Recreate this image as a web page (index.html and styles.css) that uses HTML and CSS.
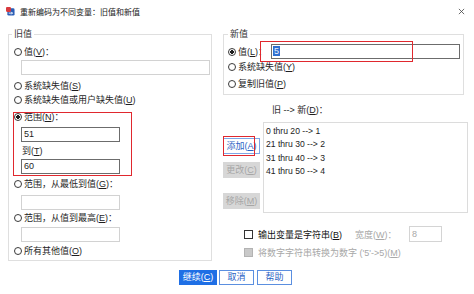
FILE: index.html
```html
<!DOCTYPE html>
<html lang="zh-CN">
<head>
<meta charset="utf-8">
<title>重新编码为不同变量：旧值和新值</title>
<link rel="stylesheet" href="styles.css">
</head>
<body>
<div class="dialog">
  <div class="titlebar">
    <svg class="app-icon" viewBox="0 0 10 10" aria-hidden="true">
      <rect x="1.5" y="1.5" width="8" height="8" rx="1.5" fill="#2a5db5"/>
      <rect x="0" y="0" width="5.5" height="5.5" rx="1.2" fill="#d83a3e"/>
      <path d="M3 6.8h4.2M5.8 5.4l1.4 1.4-1.4 1.4" fill="none" stroke="#fff" stroke-width="1"/>
    </svg>
    <span class="title">重新编码为不同变量：旧值和新值</span>
    <svg class="close" viewBox="0 0 8 8" aria-hidden="true">
      <path d="M1 1l6 6M7 1l-6 6" stroke="#444" stroke-width="0.9" fill="none"/>
    </svg>
  </div>

  <div class="main">
    <fieldset class="group old">
      <legend>旧值</legend>
      <div class="opt"><span class="radio"></span>值(<u>V</u>)：</div>
      <div class="field wide gap1"></div>
      <div class="opt gap4"><span class="radio"></span>系统缺失值(<u>S</u>)</div>
      <div class="opt"><span class="radio"></span>系统缺失值或用户缺失值(<u>U</u>)</div>
      <div class="range">
        <div class="opt"><span class="radio on"></span>范围(<u>N</u>)：</div>
        <div class="field short active gap3">51</div>
        <div class="sub">到(<u>T</u>)</div>
        <div class="field short active gap1">60</div>
        <span class="mark mark-range"></span>
      </div>
      <div class="opt gap3"><span class="radio"></span>范围，从最低到值(<u>G</u>)：</div>
      <div class="field short gap4"></div>
      <div class="opt gap1"><span class="radio"></span>范围，从值到最高(<u>E</u>)：</div>
      <div class="field short gap2"></div>
      <div class="opt gap2"><span class="radio"></span>所有其他值(<u>O</u>)</div>
    </fieldset>

    <div class="right">
      <fieldset class="group new">
        <legend>新值</legend>
        <div class="opt value-row">
          <span class="radio on"></span>
          <span class="lbl">值(<u>L</u>)：</span>
          <div class="field newval active"><span class="sel">5</span></div>
          <span class="mark mark-new"></span>
        </div>
        <div class="opt gap1"><span class="radio"></span>系统缺失值(<u>Y</u>)</div>
        <div class="opt gap3"><span class="radio"></span>复制旧值(<u>P</u>)</div>
      </fieldset>

      <div class="map-label">旧 --&gt; 新(<u>D</u>)：</div>
      <div class="map-row">
        <div class="btns">
          <div class="btn add">添加(<u>A</u>)<span class="mark mark-add"></span></div>
          <div class="btn disabled change">更改(<u>C</u>)</div>
          <div class="btn disabled remove">移除(<u>M</u>)</div>
        </div>
        <div class="list">
          <div class="item">0 thru 20 --&gt; 1</div>
          <div class="item">21 thru 30 --&gt; 2</div>
          <div class="item">31 thru 40 --&gt; 3</div>
          <div class="item">41 thru 50 --&gt; 4</div>
        </div>
      </div>

      <div class="chk-row first">
        <span class="check"></span>
        <span class="chk-text">输出变量是字符串(<u>B</u>)</span>
        <span class="wlabel">宽度(<u>W</u>)：</span>
        <div class="field width-field">8</div>
      </div>
      <div class="chk-row second">
        <span class="check off"></span>
        <span class="chk-text muted">将数字字符串转换为数字 ('5'-&gt;5)(<u>M</u>)</span>
      </div>
    </div>
  </div>

  <div class="footer">
    <div class="fbtn primary">继续(<u>C</u>)</div>
    <div class="fbtn cancel">取消</div>
    <div class="fbtn help">帮助</div>
  </div>
</div>
</body>
</html>
```

FILE: styles.css
```css
* { box-sizing: border-box; }

html, body {
  margin: 0;
  padding: 0;
  background: #ffffff;
}

body {
  width: 474px;
  height: 294px;
  overflow: hidden;
  font-family: "Liberation Sans", "Noto Sans CJK SC", sans-serif;
  font-size: 9px;
  color: #1e1e1e;
}

u { text-decoration: underline; text-underline-offset: 1px; }

/* title bar */
.titlebar {
  height: 22px;
  display: flex;
  align-items: center;
  padding: 0 9px 0 6px;
}
.app-icon { width: 9px; height: 9px; flex: none; }
.title {
  flex: 1;
  margin-left: 5px;
  font-size: 8px;
  color: #222;
}
.close { width: 7px; height: 7px; flex: none; }

/* layout */
.main {
  display: flex;
  margin-top: 6px;
  padding-left: 8px;
}

fieldset.group {
  margin: 0;
  min-width: 0;
  border: 1px solid #dfdfdf;
}
legend {
  font-size: 9px;
  line-height: 12px;
  height: 12px;
  padding: 0 2px;
  color: #333;
}

.old {
  width: 204px;
  padding: 5px 1px 2px 5px;
}
.old legend { margin-left: -2px; }

.opt {
  display: flex;
  align-items: center;
  height: 14px;
  line-height: 14px;
  white-space: nowrap;
}

.radio {
  width: 8px;
  height: 8px;
  flex: none;
  border: 1px solid #3a3a3a;
  border-radius: 50%;
  margin-right: 2px;
  background: #fff;
}
.radio.on {
  background: radial-gradient(circle, #1e1e1e 0 1.6px, #fff 2.1px);
}

.gap1 { margin-top: 1px; }
.gap2 { margin-top: 2px; }
.gap3 { margin-top: 3px; }
.gap4 { margin-top: 4px; }

.field {
  height: 15px;
  border: 1px solid #d2d2d2;
  background: #fff;
  padding-left: 2px;
  line-height: 13px;
  font-size: 9px;
  color: #1e1e1e;
}
.field.active { border-color: #6c6c6c; }
.wide { margin-left: 7px; width: 189px; }
.short { margin-left: 7px; width: 99px; }

.range {
  position: relative;
  margin-top: 3px;
}
.sub {
  height: 14px;
  line-height: 14px;
  margin-top: 2px;
  margin-left: 8px;
}

/* red annotation marks lying over content */
.mark {
  position: absolute;
  border: 1.5px solid #e0282e;
  pointer-events: none;
}
.mark-range { left: -1px; top: 2px; width: 119px; height: 64px; }
.mark-new { left: 32px; top: -3px; width: 153px; height: 21px; }
.mark-add { left: -1px; top: -3px; width: 32px; height: 20px; }

/* right column */
.right {
  margin-left: 11px;
  width: 245px;
  display: flex;
  flex-direction: column;
}

.new {
  margin-left: 1px;
  width: 241px;
  margin-top: 1px;
  padding: 4px 3px 3px 4px;
}
.new legend { margin-left: 0; }

.value-row {
  position: relative;
  height: 15px;
}
.lbl { width: 33px; flex: none; }
.newval {
  width: 189px;
  flex: none;
  padding-left: 1px;
}
.sel {
  background: #2f6fd0;
  color: #eaf1ff;
  padding: 0 1px;
}

.map-label {
  margin-top: 8px;
  height: 14px;
  line-height: 14px;
  padding-left: 49px;
}

.map-row {
  display: flex;
  margin-top: 5px;
}
.btns {
  width: 37px;
  display: flex;
  flex-direction: column;
  flex: none;
}
.btn {
  position: relative;
  height: 16px;
  line-height: 14px;
  text-align: center;
  border: 1px solid #7ea6e6;
  background: #fff;
  color: #2a62c4;
  font-size: 9px;
  white-space: nowrap;
}
.add { margin-top: 16px; }
.change { margin-top: 8px; }
.remove { margin-top: 15px; }
.btn.disabled {
  background: #d7d7d7;
  border-color: #d7d7d7;
  color: #a6a6a6;
}

.list {
  margin-left: 3px;
  width: 205px;
  height: 91px;
  border: 1px solid #dcdcdc;
  padding: 2px 0 0 2px;
}
.item {
  font-size: 8.6px;
  line-height: 13.3px;
  color: #222;
  white-space: nowrap;
}

.chk-row {
  display: flex;
  align-items: center;
  padding-left: 21px;
  white-space: nowrap;
}
.chk-row.first { margin-top: 13px; height: 16px; }
.chk-row.second { margin-top: 3px; height: 14px; }

.check {
  width: 9px;
  height: 9px;
  flex: none;
  border: 1px solid #333;
  background: #fff;
  margin-right: 5px;
}
.check.off {
  background: #c9c9c9;
  border-color: #b3b3b3;
}
.chk-text { width: 97px; color: #111; }
.chk-text.muted { width: auto; color: #a8a8a8; }
.wlabel { width: 54px; color: #a8a8a8; }
.width-field {
  width: 33px;
  height: 16px;
  line-height: 14px;
  border-color: #d4d4d4;
  color: #a8a8a8;
}

/* footer */
.footer {
  display: flex;
  justify-content: center;
  margin-top: 9px;
  padding-right: 3px;
}
.fbtn {
  height: 15px;
  line-height: 13px;
  text-align: center;
  font-size: 9px;
  border: 1px solid #5b8fe0;
  color: #2a62c4;
  background: #fff;
  white-space: nowrap;
}
.primary {
  width: 38px;
  background: #1f6fe5;
  border-color: #1f6fe5;
  color: #fff;
}
.cancel { width: 35px; margin-left: 2px; }
.help { width: 35px; margin-left: 3px; }
```
